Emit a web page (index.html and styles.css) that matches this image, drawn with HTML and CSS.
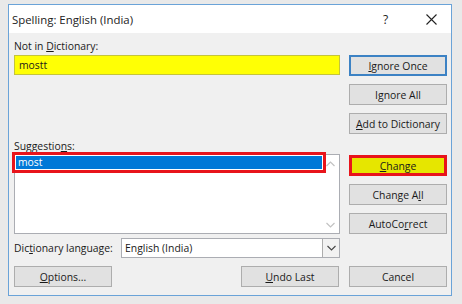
FILE: index.html
```html
<html>
<head>
    <title>Spelling: English (India)</title>
    <link rel="stylesheet" href="styles.css">
</head>
<body>
    <div class="window">
        <div class="titlebar">
            <span class="title">Spelling: English (India)</span>
            <span class="help">?</span>
            <span class="close">
                <svg width="11" height="11" viewBox="0 0 11 11">
                    <path d="M0.5 0.5 L10.5 10.5 M10.5 0.5 L0.5 10.5" stroke="#222" stroke-width="1.1" fill="none"/>
                </svg>
            </span>
        </div>

        <div class="content">
            <div class="left-col">
                <div class="label">Not in <u>D</u>ictionary:</div>
                <div class="word-box">mostt</div>

                <div class="label suggestions-label">Suggestio<u>n</u>s:</div>
                <div class="list">
                    <div class="list-items">
                        <div class="item selected">most</div>
                    </div>
                    <div class="scrollbar">
                        <svg width="9" height="6" viewBox="0 0 9 6">
                            <path d="M0.5 5 L4.5 1 L8.5 5" stroke="#c2c2c2" stroke-width="1.2" fill="none"/>
                        </svg>
                        <svg width="9" height="6" viewBox="0 0 9 6">
                            <path d="M0.5 1 L4.5 5 L8.5 1" stroke="#c2c2c2" stroke-width="1.2" fill="none"/>
                        </svg>
                    </div>
                </div>

                <div class="lang-row">
                    <span class="lang-label">Dic<u>t</u>ionary language:</span>
                    <div class="select">
                        <span class="select-value">English (India)</span>
                        <span class="select-arrow">
                            <svg width="9" height="6" viewBox="0 0 9 6">
                                <path d="M0.5 1 L4.5 5 L8.5 1" stroke="#444" stroke-width="1.1" fill="none"/>
                            </svg>
                        </span>
                    </div>
                </div>
            </div>

            <div class="right-col">
                <button class="btn default"><u>I</u>gnore Once</button>
                <button class="btn">I<u>g</u>nore All</button>
                <button class="btn"><u>A</u>dd to Dictionary</button>
                <button class="btn highlight change"><u>C</u>hange</button>
                <button class="btn">Change A<u>l</u>l</button>
                <button class="btn">AutoCo<u>r</u>rect</button>
            </div>

            <div class="bottom-row">
                <button class="btn"><u>O</u>ptions...</button>
                <div class="bottom-right">
                    <button class="btn"><u>U</u>ndo Last</button>
                    <button class="btn">Cancel</button>
                </div>
            </div>
        </div>
    </div>
</body>
</html>
```

FILE: styles.css
```css
body {
    margin: 0;
    background: #e9e9e9;
    font-family: 'Open Sans', 'Noto Sans', sans-serif;
    font-size: 10.4px;
    color: #1a1a1a;
}
.window {
    width: 442px;
    margin: 4px 0 0 8px;
    border: 1px solid #6aa3d8;
    background: #f0f0f0;
}
.titlebar {
    height: 28px;
    background: #fff;
    display: flex;
    align-items: center;
    padding-left: 3px;
}
.title {
    font-size: 11.4px;
    flex: 1;
    color: #222;
}
.help {
    font-size: 12px;
    width: 14px;
    margin-right: 29px;
    color: #222;
}
.close {
    display: flex;
    margin-right: 14px;
}
.content {
    display: grid;
    grid-template-columns: 326px 98px;
    column-gap: 9px;
    padding: 5px 3px 8px 5px;
}
.left-col {
    display: flex;
    flex-direction: column;
}
.label {
    height: 16px;
    line-height: 16px;
}
.word-box {
    margin-top: 1px;
    height: 18px;
    line-height: 18px;
    background: #ffff05;
    border: 1px solid #c4c43c;
    padding-left: 4px;
}
.suggestions-label { margin-top: 63px; }
.list {
    height: 78px;
    background: #fff;
    border: 1px solid #abadb3;
    display: flex;
}
.list-items {
    flex: 1;
    padding: 1px 0 0 1px;
}
.item {
    height: 13px;
    line-height: 13px;
    padding-left: 2px;
}
.selected {
    background: #0078d7;
    color: #fff;
    outline: 3px solid #e8141b;
    outline-offset: 1px;
}
.scrollbar {
    width: 17px;
    display: flex;
    flex-direction: column;
    justify-content: space-between;
    align-items: center;
    padding: 6px 0 5px;
}
.lang-row {
    margin-top: 4px;
    display: flex;
    align-items: center;
}
.lang-label { width: 107px; }
.select {
    flex: 1;
    height: 18px;
    background: #fff;
    border: 1px solid #abadb3;
    display: flex;
    align-items: center;
}
.select-value {
    flex: 1;
    padding-left: 3px;
}
.select-arrow {
    width: 16px;
    height: 18px;
    border-left: 1px solid #adadad;
    background: #f2f2f2;
    display: flex;
    align-items: center;
    justify-content: center;
}
.right-col {
    display: flex;
    flex-direction: column;
    gap: 8px;
    padding-top: 17px;
}
.btn {
    height: 21px;
    width: 98px;
    padding: 0;
    background: #e1e1e1;
    border: 1px solid #adadad;
    font-family: inherit;
    font-size: 10.4px;
    color: #1a1a1a;
}
.default { border: 2px solid #3c82c4; }
.change { margin-top: 13px; }
.highlight {
    background: #e6e600;
    border: 3px solid #e8141b;
}
.bottom-row {
    grid-column: 1 / 3;
    display: flex;
    justify-content: space-between;
    margin-top: 8px;
}
.bottom-right {
    display: flex;
    gap: 10px;
}
```
